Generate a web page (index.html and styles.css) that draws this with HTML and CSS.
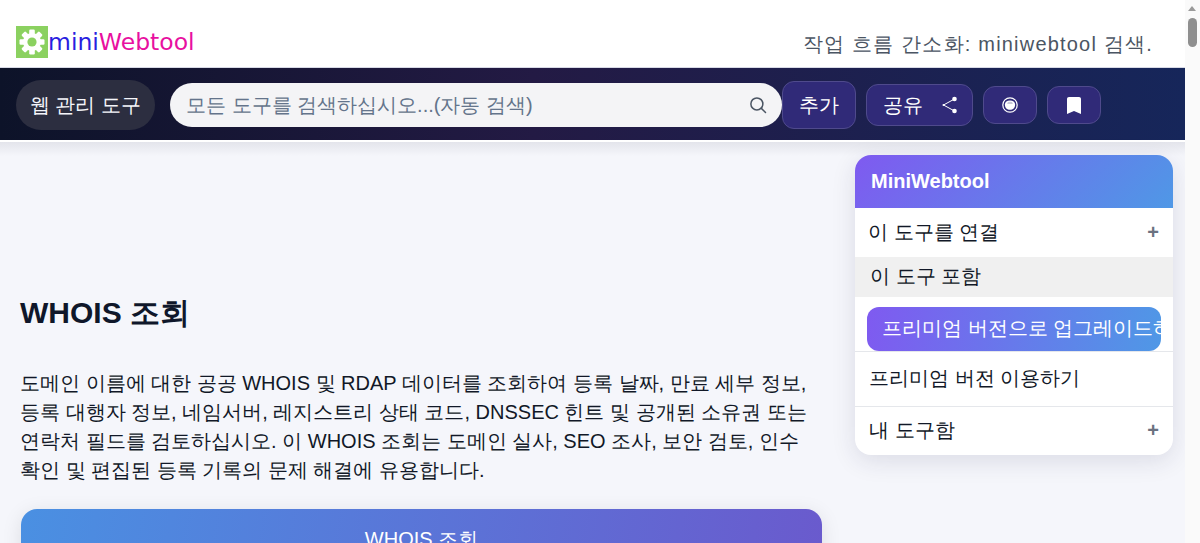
FILE: index.html
```html
<!DOCTYPE html>
<html lang="ko">
<head>
    <meta charset="UTF-8">
    <meta name="viewport" content="width=device-width, initial-scale=1.0">
    <title>WHOIS 조회 - miniWebtool</title>
    <link rel="stylesheet" href="styles.css">
</head>
<body>
    <header class="top-bar">
        <a class="logo" href="#">
            <span class="logo-icon">
                <svg viewBox="0 0 32 32" width="32" height="32">
                    <rect width="32" height="32" fill="#8bd160"/>
                    <g fill="#fff">
                        <circle cx="16" cy="16" r="9"/>
                        <rect x="13.2" y="3.5" width="5.6" height="25" rx="1.2"/>
                        <rect x="13.2" y="3.5" width="5.6" height="25" rx="1.2" transform="rotate(45 16 16)"/>
                        <rect x="13.2" y="3.5" width="5.6" height="25" rx="1.2" transform="rotate(90 16 16)"/>
                        <rect x="13.2" y="3.5" width="5.6" height="25" rx="1.2" transform="rotate(135 16 16)"/>
                    </g>
                    <circle cx="16" cy="16" r="4.6" fill="#8bd160"/>
                </svg>
            </span>
            <span class="logo-mini">mini</span><span class="logo-web">Webtool</span>
        </a>
        <p class="tagline">작업 흐름 간소화: miniwebtool 검색.</p>
    </header>

    <nav class="nav-bar">
        <button class="cat-btn">웹 관리 도구</button>
        <div class="search-box">
            <span class="search-text">모든 도구를 검색하십시오...(자동 검색)</span>
            <svg class="search-icon" viewBox="0 0 24 24" width="18" height="18" fill="none" stroke="#4b5563" stroke-width="2" stroke-linecap="round">
                <circle cx="10.5" cy="10.5" r="8"/>
                <path d="M16.5 16.5 22 22"/>
            </svg>
        </div>
        <button class="nav-btn add-btn">추가</button>
        <button class="nav-btn share-btn">
            공유
            <svg viewBox="0 0 15 18" width="15" height="18" fill="none" stroke="#fff" stroke-width="1">
                <path d="M12.5 3 1.5 9l11 6"/>
                <circle cx="12.5" cy="3" r="2.3" fill="#fff" stroke="none"/>
                <circle cx="1.5" cy="9" r="1" fill="#fff" stroke="none"/>
                <circle cx="12.5" cy="15" r="2.3" fill="#fff" stroke="none"/>
            </svg>
        </button>
        <button class="nav-btn icon-btn">
            <svg viewBox="0 0 16 16" width="16" height="16">
                <circle cx="8" cy="8" r="7.2" fill="none" stroke="#fff" stroke-width="1.2"/>
                <path d="M2.9 7.5C3 4.700 5 3.400 8 3.400s5 1.300 5.100 4.100C13.100 11 11 12.800 8 12.800S2.900 11 2.900 7.500Z" fill="#fff"/>
                <path d="M5 6.500C5.500 5.200 6.600 4.800 8 4.800s2.500.4 3 1.700C10 7.300 6 7.300 5 6.500Z" fill="#c9c9d8"/>
            </svg>
        </button>
        <button class="nav-btn icon-btn">
            <svg viewBox="0 0 14 17" width="14" height="17">
                <path d="M0 2C0 .8.8 0 2 0h10c1.200 0 2 .8 2 2v15l-7-3-7 3Z" fill="#fff"/>
            </svg>
        </button>
    </nav>

    <div class="page">
        <main class="content">
            <h1>WHOIS 조회</h1>
            <p class="intro">도메인 이름에 대한 공공 WHOIS 및 RDAP 데이터를 조회하여 등록 날짜, 만료 세부 정보, 등록 대행자 정보, 네임서버, 레지스트리 상태 코드, DNSSEC 힌트 및 공개된 소유권 또는 연락처 필드를 검토하십시오. 이 WHOIS 조회는 도메인 실사, SEO 조사, 보안 검토, 인수 확인 및 편집된 등록 기록의 문제 해결에 유용합니다.</p>
            <section class="tool-card">
                <div class="tool-head">WHOIS 조회</div>
            </section>
        </main>

        <aside class="sidebar">
            <div class="side-title">MiniWebtool</div>
            <div class="side-row">이 도구를 연결 <span class="plus">+</span></div>
            <div class="side-row side-include">이 도구 포함</div>
            <div class="side-upgrade">
                <a class="upgrade-btn" href="#">프리미엄 버전으로 업그레이드하기</a>
            </div>
            <div class="side-row side-premium">프리미엄 버전 이용하기</div>
            <div class="side-row side-last">내 도구함 <span class="plus">+</span></div>
        </aside>
    </div>

    <!-- the browser's scrollbar is not drawn in the headless shot -->
    <div class="scrollbar">
        <span class="scroll-arrow"></span>
        <span class="scroll-thumb"></span>
    </div>
</body>
</html>
```

FILE: styles.css
```css
* {
    box-sizing: border-box;
}

body {
    margin: 0;
    padding-right: 15px;
    background-color: #f5f6fb;
    color: #0f172a;
    font-family: "Liberation Sans", Arial, sans-serif;
}

button {
    font-family: inherit;
    cursor: pointer;
}

.top-bar {
    height: 67px;
    background-color: #fff;
    display: flex;
    justify-content: space-between;
    align-items: flex-end;
    padding: 0 32px 9px 16px;
}

.logo {
    display: flex;
    align-items: center;
    font-family: "DejaVu Sans", sans-serif;
    font-size: 23.5px;
    text-decoration: none;
}

.logo-icon {
    display: block;
    width: 32px;
    height: 32px;
}

.logo-icon svg {
    display: block;
}

.logo-mini {
    color: #2a1ee0;
}

.logo-web {
    color: #e80fa0;
}

.tagline {
    margin: 0;
    font-size: 20px;
    letter-spacing: 1.2px;
    color: #4b5563;
}

.nav-bar {
    height: 73px;
    border-top: 1px solid #d8dae6;
    background: linear-gradient(90deg, #0d1329 0%, #231a44 45%, #16265a 100%);
    display: flex;
    align-items: center;
    padding: 2px 16px 0;
}

.cat-btn {
    height: 50px;
    width: 139px;
    padding: 0;
    border: none;
    border-radius: 25px;
    background-color: #2c2e40;
    color: #f5f6fb;
    font-size: 20px;
}

.search-box {
    width: 612px;
    height: 44px;
    margin-left: 15px;
    padding: 0 15px 0 16px;
    border-radius: 22px;
    background-color: #f4f4f6;
    display: flex;
    justify-content: space-between;
    align-items: center;
}

.search-text {
    font-size: 20px;
    color: #64748b;
}

.search-icon {
    flex-shrink: 0;
}

.nav-btn {
    border: 1px solid #4f4a8c;
    border-radius: 12px;
    background-color: #302a78;
    color: #fff;
    font-size: 20px;
    display: flex;
    justify-content: center;
    align-items: center;
    padding: 0;
}

.add-btn {
    width: 74px;
    height: 48px;
}

.share-btn {
    width: 107px;
    height: 42px;
    margin-left: 10px;
    gap: 19px;
}

.icon-btn {
    width: 54px;
    height: 38px;
    margin-left: 10px;
}

.page {
    display: flex;
    justify-content: space-between;
    align-items: flex-start;
    padding: 13px 12px 0 20px;
    background: linear-gradient(#e3e4eb 0, #f5f6fb 14px);
    border-top: 2px solid #fff;
}

.content {
    width: 802px;
    padding-top: 135px;
}

h1 {
    margin: 0 0 33px;
    font-size: 30px;
    line-height: 46px;
    font-weight: 700;
    color: #0f172a;
}

.intro {
    margin: 0 0 24px;
    font-size: 20px;
    line-height: 29px;
    color: #111827;
}

.tool-card {
    margin-left: 1px;
    border-radius: 16px;
    overflow: hidden;
    background-color: #fff;
    box-shadow: 0 4px 20px rgba(0, 0, 0, 0.1);
}

.tool-head {
    height: 70px;
    padding-top: 17px;
    background: linear-gradient(100deg, #4a90e2 0%, #6a5acd 100%);
    color: #fff;
    font-size: 20px;
    text-align: center;
}

.sidebar {
    width: 318px;
    border-radius: 16px;
    overflow: hidden;
    background-color: #fff;
    box-shadow: 0 6px 24px rgba(30, 35, 70, 0.12);
}

.side-title {
    height: 53px;
    padding: 15px 16px 0;
    background: linear-gradient(135deg, #7f5af0 0%, #4f98e6 100%);
    color: #fff;
    font-size: 20px;
    font-weight: 700;
}

.side-row {
    display: flex;
    justify-content: space-between;
    align-items: center;
    height: 49px;
    padding: 0 14px 0 13px;
    font-size: 20px;
    color: #111827;
}

.plus {
    font-size: 20px;
    font-weight: 700;
    color: #6b7280;
}

.side-include {
    height: 40px;
    padding-left: 15px;
    padding-bottom: 2px;
    background-color: #f0f0f0;
}

.side-upgrade {
    padding: 10px 12px 0;
    height: 55px;
    border-bottom: 1px solid #e5e7eb;
}

.upgrade-btn {
    display: block;
    height: 44px;
    padding: 0 0 0 15px;
    border-radius: 12px;
    background: linear-gradient(100deg, #7f5af0 0%, #4f98e6 100%);
    color: #fff;
    font-size: 20px;
    line-height: 42px;
    white-space: nowrap;
    overflow: hidden;
    text-decoration: none;
}

.side-premium {
    height: 55px;
    padding-left: 14px;
    padding-bottom: 2px;
    border-bottom: 1px solid #e5e7eb;
}

.side-last {
    height: 48px;
    padding-left: 14px;
    padding-bottom: 2px;
}

.scrollbar {
    position: fixed;
    top: 0;
    right: 0;
    bottom: 0;
    width: 15px;
    background-color: #fafafa;
}

.scroll-arrow {
    position: absolute;
    top: 6px;
    left: 3px;
    border-left: 4.5px solid transparent;
    border-right: 4.500px solid transparent;
    border-bottom: 5px solid #9a9a9a;
}

.scroll-thumb {
    position: absolute;
    top: 18px;
    left: 3px;
    width: 9px;
    height: 29px;
    border-radius: 5px;
    background-color: #8f8f8f;
}
```
